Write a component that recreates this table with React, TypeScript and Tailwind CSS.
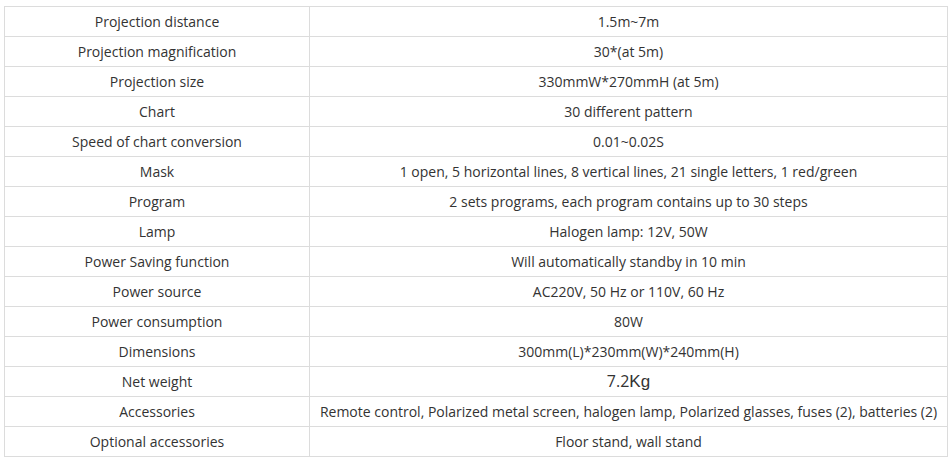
import React from 'react';

const rows: [string, React.ReactNode][] = [
  ['Projection distance', '1.5m~7m'],
  ['Projection magnification', '30*(at 5m)'],
  ['Projection size', '330mmW*270mmH (at 5m)'],
  ['Chart', '30 different pattern'],
  ['Speed of chart conversion', '0.01~0.02S'],
  ['Mask', '1 open, 5 horizontal lines, 8 vertical lines, 21 single letters, 1 red/green'],
  ['Program', '2 sets programs, each program contains up to 30 steps'],
  ['Lamp', 'Halogen lamp: 12V, 50W'],
  ['Power Saving function', 'Will automatically standby in 10 min'],
  ['Power source', 'AC220V, 50 Hz or 110V, 60 Hz'],
  ['Power consumption', '80W'],
  ['Dimensions', '300mm(L)*230mm(W)*240mm(H)'],
  [
    'Net weight',
    <span className="text-[16px]">
      7.2<span className="font-['Liberation_Sans',sans-serif] text-[17px]">Kg</span>
    </span>,
  ],
  ['Accessories', 'Remote control, Polarized metal screen, halogen lamp, Polarized glasses, fuses (2), batteries (2)'],
  ['Optional accessories', 'Floor stand, wall stand'],
];

const App: React.FC = () => {
  return (
    <div className="w-[952px] h-[460px] bg-white pt-[6px] pl-[4px] font-['Open_Sans',sans-serif] text-[14px] text-[#333]">
      <table className="w-[944px] border-collapse">
        <tbody>
          {rows.map(([label, value], i) => (
            <tr key={i} className="h-[30px]">
              <td className="w-[305px] border border-[#dcdcdc] text-center p-0 leading-[29px]">{label}</td>
              <td className="border border-[#dcdcdc] text-center p-0 leading-[29px]">{value}</td>
            </tr>
          ))}
        </tbody>
      </table>
    </div>
  );
};

export default App;
